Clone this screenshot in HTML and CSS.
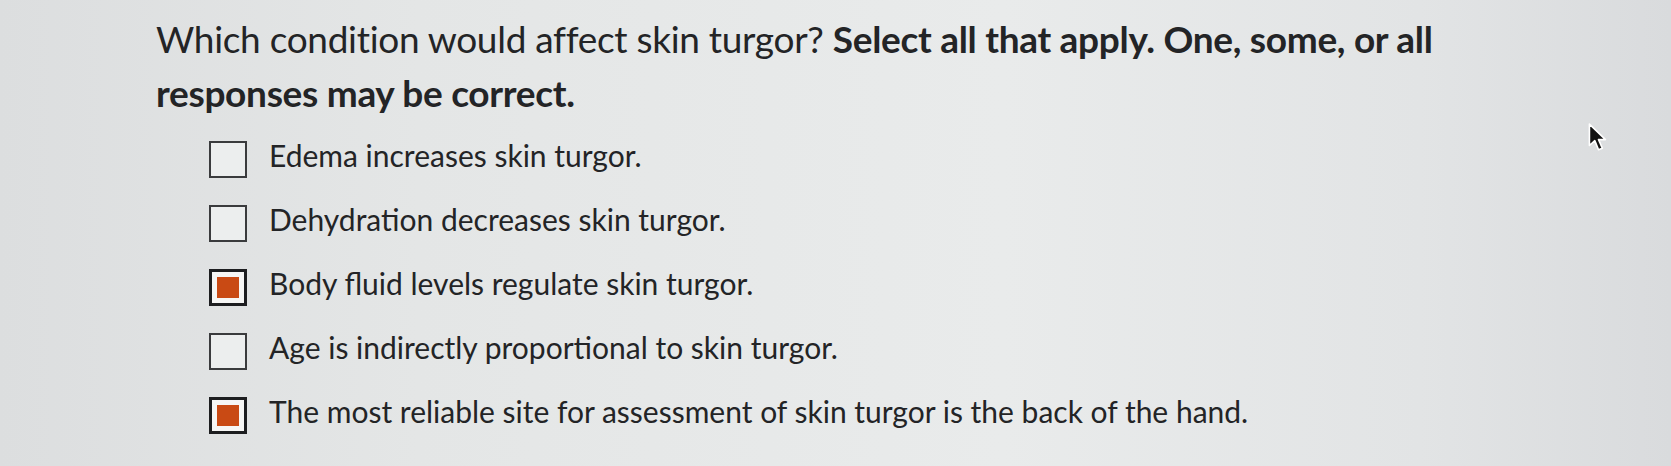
FILE: index.html
```html
<!DOCTYPE html>
<html lang="en">
<head>
<meta charset="utf-8">
<title>Skin turgor question</title>
<link rel="stylesheet" href="styles.css">
</head>
<body>
<main class="question">
  <h1 class="stem">Which condition would affect skin turgor? <strong>Select all that apply. One, some, or all responses may be correct.</strong></h1>
  <ul class="options">
    <li class="option"><span class="box"></span><span class="label">Edema increases skin turgor.</span></li>
    <li class="option"><span class="box"></span><span class="label">Dehydration decreases skin turgor.</span></li>
    <li class="option"><span class="box checked"></span><span class="label">Body fluid levels regulate skin turgor.</span></li>
    <li class="option"><span class="box"></span><span class="label">Age is indirectly proportional to skin turgor.</span></li>
    <li class="option"><span class="box checked"></span><span class="label">The most reliable site for assessment of skin turgor is the back of the hand.</span></li>
  </ul>
</main>
<svg class="cursor" width="22" height="30" viewBox="0 0 20 28" aria-hidden="true">
  <path d="M2 1 L2 21 L7 16.5 L10.5 25 L14 23.5 L10.5 15.5 L17 15.5 Z" fill="#111" stroke="#fff" stroke-width="1.5" stroke-linejoin="round"/>
</svg>
</body>
</html>
```
FILE: styles.css
```css
html, body {
  margin: 0;
  padding: 0;
}
body {
  width: 1671px;
  height: 466px;
  overflow: hidden;
  position: relative;
  background: linear-gradient(90deg, #dcdedf 0%, #e4e6e6 25%, #e9ebeb 60%, #e2e4e5 85%, #d9dbdd 100%);
  font-family: Lato, "Noto Sans", sans-serif;
  color: #1e1f21;
}
.question {
  padding: 12px 0 0 156px;
}
.stem {
  margin: 0;
  width: 1320px;
  font-size: 37px;
  line-height: 54px;
  font-weight: 400;
  letter-spacing: -0.3px;
  color: #232426;
}
.stem strong {
  font-weight: 700;
}
.options {
  list-style: none;
  margin: 21px 0 0 0;
  padding: 0 0 0 53px;
  display: flex;
  flex-direction: column;
  gap: 27px;
}
.option {
  display: flex;
  align-items: center;
  gap: 22px;
  height: 37px;
}
.box {
  box-sizing: border-box;
  width: 38px;
  height: 37px;
  border: 2px solid #3a3b3d;
  background: #eceeee;
  flex: none;
}
.box.checked {
  border: 3px solid #1d1e20;
  background: #f6f6f5;
  padding: 5px;
}
.box.checked::after {
  content: "";
  display: block;
  width: 100%;
  height: 100%;
  background: #c94a14;
}
.label {
  font-size: 30px;
  line-height: 37px;
  color: #232426;
  position: relative;
  top: -4px;
}
.cursor {
  position: absolute;
  left: 1587px;
  top: 123px;
}
```
